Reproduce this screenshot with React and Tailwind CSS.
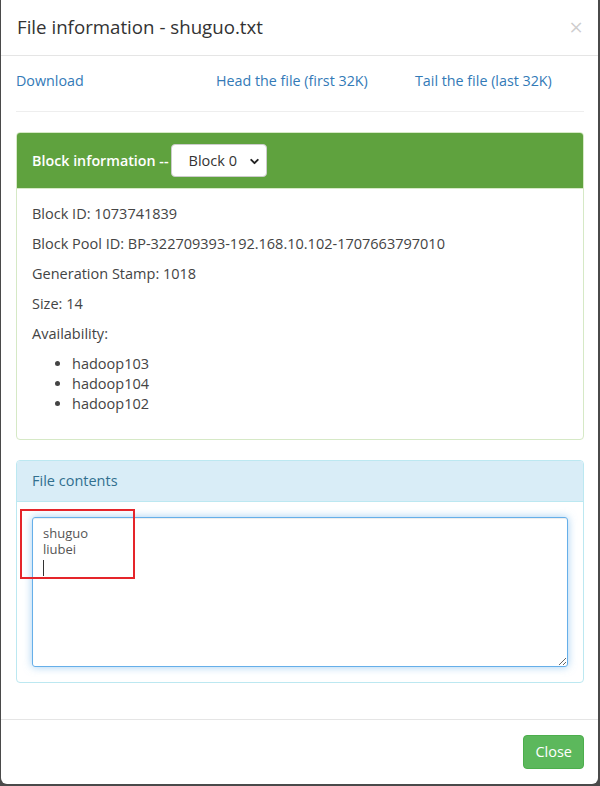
import { ChevronDown } from "lucide-react"

const blockInfo = [
  "Block ID: 1073741839",
  "Block Pool ID: BP-322709393-192.168.10.102-1707663797010",
  "Generation Stamp: 1018",
  "Size: 14",
  "Availability:",
]

const hosts = ["hadoop103", "hadoop104", "hadoop102"]

export default function App() {
  return (
    <div className="relative w-[600px] h-[786px] bg-[#4a4a4a] overflow-hidden font-['Open_Sans',sans-serif] text-[#333]">
      {/* Modal */}
      <div className="ml-[1px] w-[597px] h-[784px] bg-white rounded-b-[6px] flex flex-col">
        {/* Header */}
        <div className="h-[56px] border-b border-[#e5e5e5] pl-4 pr-[15px] flex items-center justify-between">
          <h4 className="text-[18.7px] leading-none text-[#333]">File information - shuguo.txt</h4>
          <button className="text-[24px] leading-none text-black/20 -mt-[2px]">×</button>
        </div>

        {/* Body */}
        <div className="pl-[15px] pr-[14px] pt-[15px] pb-[15px] flex-1">
          <div className="-ml-[15px] -mr-[14px] grid grid-cols-3 text-[14.3px] leading-5 text-[#337ab7]">
            <a href="#" className="px-[15px]">Download</a>
            <a href="#" className="px-[15px] pl-[16px]">Head the file (first 32K)</a>
            <a href="#" className="px-[15px] pl-[16px]">Tail the file (last 32K)</a>
          </div>
          <hr className="mt-5 mb-5 border-t border-[#eee]" />

          {/* Block information panel */}
          <div className="border border-[#d6e9c6] rounded-[4px] mb-5">
            <div className="bg-[#5fa23e] rounded-t-[3px] px-[15px] py-[11px] flex items-center">
              <span className="text-white font-semibold text-[14.3px]">Block information --</span>
              <div className="relative ml-[2px] w-[96px] h-[33px] bg-white rounded-[4px] border border-[#ccc] flex items-center pl-[17px]">
                <span className="text-[14.5px] text-[#333]">Block 0</span>
                <ChevronDown className="absolute right-[5px] top-[10px] w-[13px] h-[13px] text-[#222]" strokeWidth={3.5} />
              </div>
            </div>
            <div className="border-t border-[#d6e9c6] px-[15px] pt-[15px] pb-[15px] text-[14.5px] leading-5 text-[#444]">
              {blockInfo.map((line) => (
                <p key={line} className="mb-[10px]">{line}</p>
              ))}
              <ul className="list-disc pl-10 mb-[10px]">
                {hosts.map((h) => (
                  <li key={h}>{h}</li>
                ))}
              </ul>
            </div>
          </div>

          {/* File contents panel */}
          <div className="border border-[#bce8f1] rounded-[4px]">
            <div className="bg-[#d9edf7] border-b border-[#bce8f1] rounded-t-[3px] px-[15px] py-[10px] text-[14.5px] leading-5 text-[#31708f]">
              File contents
            </div>
            <div className="p-[15px]">
              <div className="relative">
                <textarea
                  readOnly
                  defaultValue={"shuguo\nliubei\n"}
                  className="block w-full h-[150px] border border-[#66afe9] rounded-[3px] px-[10px] pt-[7px] text-[13px] leading-4 text-[#555] outline-none resize-y shadow-[inset_0_1px_1px_rgba(0,0,0,0.075),0_0_8px_rgba(102,175,233,0.6)]"
                />
                <span className="absolute left-[11px] top-[43px] w-[1px] h-[16px] bg-[#333]" />
              </div>
            </div>
          </div>
        </div>

        {/* Footer */}
        <div className="border-t border-[#e5e5e5] pl-[15px] pr-[14px] py-[15px] flex justify-end">
          <button className="h-[34px] px-[11px] bg-[#5cb85c] border border-[#4cae4c] rounded-[4px] text-white text-[14.5px]">
            Close
          </button>
        </div>
      </div>

      {/* Annotation box */}
      <div className="absolute left-[20px] top-[509px] w-[115px] h-[70px] border-2 border-[#e5252a]" />
    </div>
  )
}
